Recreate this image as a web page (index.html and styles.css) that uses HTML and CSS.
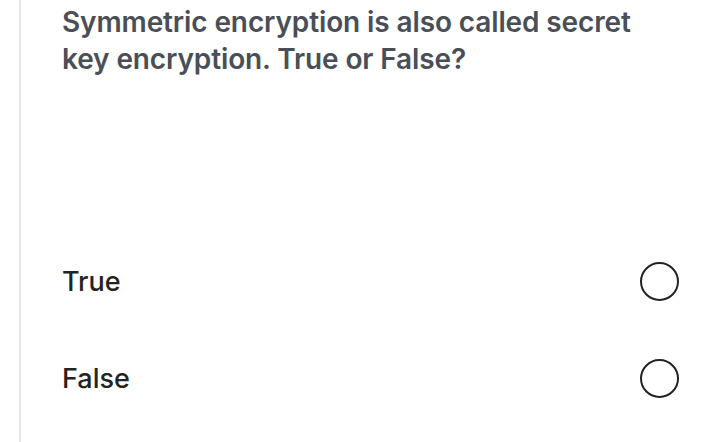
FILE: index.html
```html
<!DOCTYPE html>
<html>
<head>
<meta charset="utf-8">
<link rel="stylesheet" href="styles.css">
</head>
<body>
<div class="page">
  <div class="card">
    <h1 class="question">Symmetric encryption is also called secret key encryption. True or False?</h1>
    <div class="options">
      <label class="option">
        <span class="option-text">True</span>
        <span class="radio"></span>
      </label>
      <label class="option">
        <span class="option-text">False</span>
        <span class="radio"></span>
      </label>
    </div>
  </div>
</div>
</body>
</html>
```

FILE: styles.css
```css
html, body {
  margin: 0;
  padding: 0;
  background: #ffffff;
}
.page {
  width: 707px;
  height: 442px;
  overflow: hidden;
  padding-left: 19px;
  box-sizing: border-box;
}
.card {
  height: 100%;
  border-left: 2px solid #e3e6eb;
  padding: 4px 28px 0 41px;
  box-sizing: border-box;
  font-family: Inter, "Noto Sans", sans-serif;
}
.question {
  margin: 0;
  font-size: 28px;
  line-height: 37px;
  font-weight: 600;
  letter-spacing: -0.12px;
  color: #4a4f57;
  width: 600px;
}
.options {
  margin-top: 155px;
  display: flex;
  flex-direction: column;
}
.option {
  height: 97px;
  display: flex;
  align-items: center;
  justify-content: space-between;
}
.option-text {
  font-size: 27px;
  font-weight: 500;
  color: #232323;
}
.radio {
  width: 39px;
  height: 39px;
  border: 2.5px solid #232323;
  border-radius: 50%;
  box-sizing: border-box;
}
```
